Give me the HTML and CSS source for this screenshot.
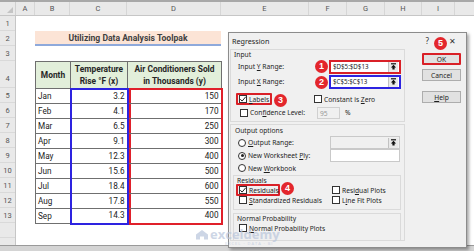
FILE: index.html
```html
<!DOCTYPE html>
<html lang="en">
<head>
    <meta charset="UTF-8">
    <title>Regression - Data Analysis Toolpak</title>
    <link rel="stylesheet" href="styles.css">
</head>
<body>
    <div class="sheet">
        <div class="colhdr">
            <div class="corner"><span class="tri"></span></div>
            <div class="col c-a">A</div>
            <div class="col c-b">B</div>
            <div class="col c-c">C</div>
            <div class="col c-d">D</div>
            <div class="col c-e">E</div>
            <div class="col c-f">F</div>
            <div class="col c-g">G</div>
            <div class="col c-h">H</div>
            <div class="col c-i">I</div>
            <div class="col c-j"></div>
        </div>
        <div class="sheet-main">
            <div class="rowhdr">
                <div class="rn">1</div>
                <div class="rn">2</div>
                <div class="rn">3</div>
                <div class="rn tall">4</div>
                <div class="rn">5</div>
                <div class="rn">6</div>
                <div class="rn">7</div>
                <div class="rn">8</div>
                <div class="rn">9</div>
                <div class="rn">10</div>
                <div class="rn">11</div>
                <div class="rn">12</div>
                <div class="rn">13</div>
                <div class="rn"></div>
            </div>
            <div class="cells">
                <div class="blank"></div>
                <div class="title">Utilizing Data Analysis Toolpak</div>
                <div class="blank"></div>
                <table class="data">
                    <tr class="head">
                        <th class="w-b">Month</th>
                        <th class="w-c">Temperature<br>Rise °F (x)</th>
                        <th class="w-d">Air Conditioners Sold<br>in Thousands (y)</th>
                    </tr>
                    <tr><td>Jan</td><td class="sx first">3.2</td><td class="sy first">150</td></tr>
                    <tr><td>Feb</td><td class="sx">4.1</td><td class="sy">170</td></tr>
                    <tr><td>Mar</td><td class="sx">6.5</td><td class="sy">250</td></tr>
                    <tr><td>Apr</td><td class="sx">9.1</td><td class="sy">300</td></tr>
                    <tr><td>May</td><td class="sx">12.3</td><td class="sy">400</td></tr>
                    <tr><td>Jun</td><td class="sx">15.6</td><td class="sy">500</td></tr>
                    <tr><td>Jul</td><td class="sx">18.4</td><td class="sy">600</td></tr>
                    <tr><td>Aug</td><td class="sx">17.8</td><td class="sy">550</td></tr>
                    <tr><td>Sep</td><td class="sx last">14.3</td><td class="sy last">400</td></tr>
                </table>
            </div>
        </div>
        <div class="bottombar"></div>
    </div>

    <div class="dialog">
        <div class="dlg-title">
            <span>Regression</span>
            <span class="dlg-ctl"><span class="q">?</span><span class="x">✕</span></span>
        </div>
        <div class="dlg-body">
            <div class="dlg-main">
                <div class="grp grp-input">
                    <div class="grp-label">Input</div>
                    <div class="fld">
                        <span class="fld-label">Input <u>Y</u> Range:</span>
                        <span class="ref ref-red"><span class="ref-text">$D$5:$D$13</span><span class="pick"><svg viewBox="0 0 7 7" width="7" height="7"><path d="M1 0.8h5" stroke="#111" stroke-width="1.2"/><path d="M3.5 1.8l2.6 2.6h-1.5v2.2h-2.2v-2.2h-1.5z" fill="#111"/></svg></span></span>
                    </div>
                    <div class="fld">
                        <span class="fld-label">Input <u>X</u> Range:</span>
                        <span class="ref ref-blue"><span class="ref-text">$C$5:$C$13</span><span class="pick"><svg viewBox="0 0 7 7" width="7" height="7"><path d="M1 0.8h5" stroke="#111" stroke-width="1.2"/><path d="M3.5 1.8l2.6 2.6h-1.5v2.2h-2.2v-2.2h-1.5z" fill="#111"/></svg></span></span>
                    </div>
                    <div class="opt labels-row">
                        <span class="hl hl-labels"><span class="chk"><svg viewBox="0 0 8 8" width="8" height="8"><path d="M1.3 4.2l1.8 1.9 3.7-4.4" fill="none" stroke="#222" stroke-width="1"/></svg></span><span><u>L</u>abels</span></span>
                        <span class="opt-right"><span class="chk"></span><span>Constant is <u>Z</u>ero</span></span>
                    </div>
                    <div class="opt conf-row">
                        <span class="chk"></span><span>Con<u>f</u>idence Level:</span>
                        <span class="num">95</span><span class="pct">%</span>
                    </div>
                </div>
                <div class="grp grp-output">
                    <div class="grp-label">Output options</div>
                    <div class="fld">
                        <span class="radio-label"><span class="radio"></span><span><u>O</u>utput Range:</span></span>
                        <span class="ref ref-off"><span class="ref-text"></span><span class="pick"><svg viewBox="0 0 7 7" width="7" height="7"><path d="M1 0.8h5" stroke="#111" stroke-width="1.2"/><path d="M3.5 1.8l2.6 2.6h-1.5v2.2h-2.2v-2.2h-1.5z" fill="#111"/></svg></span></span>
                    </div>
                    <div class="fld">
                        <span class="radio-label"><span class="radio on"></span><span>New Worksheet <u>P</u>ly:</span></span>
                        <span class="ref ref-plain"></span>
                    </div>
                    <div class="opt wb-row"><span class="radio"></span><span>New <u>W</u>orkbook</span></div>
                    <div class="sub sub-res">
                        <div class="grp-label">Residuals</div>
                        <div class="opt res-row">
                            <span class="hl hl-res"><span class="chk"><svg viewBox="0 0 8 8" width="8" height="8"><path d="M1.3 4.2l1.8 1.9 3.7-4.4" fill="none" stroke="#222" stroke-width="1"/></svg></span><span>Residuals</span></span>
                            <span class="opt-right"><span class="chk"></span><span>Resi<u>d</u>ual Plots</span></span>
                        </div>
                        <div class="opt res-row">
                            <span class="plain"><span class="chk"></span><span><u>S</u>tandardized Residuals</span></span>
                            <span class="opt-right"><span class="chk"></span><span>L<u>i</u>ne Fit Plots</span></span>
                        </div>
                    </div>
                    <div class="sub sub-norm">
                        <div class="grp-label">Normal Probability</div>
                        <div class="opt res-row">
                            <span class="plain"><span class="chk"></span><span><u>N</u>ormal Probability Plots</span></span>
                        </div>
                    </div>
                </div>
            </div>
            <div class="dlg-buttons">
                <button class="btn btn-ok">OK</button>
                <button class="btn btn-cancel">Cancel</button>
                <button class="btn btn-help"><u>H</u>elp</button>
            </div>
        </div>

        <span class="badge b1">1</span>
        <span class="badge b2">2</span>
        <span class="badge b3">3</span>
        <span class="badge b4">4</span>
        <span class="badge b5">5</span>
    </div>

    <div class="watermark">
        <div class="wm-main">
            <svg viewBox="0 0 14 11" width="14" height="11"><path d="M1 5.5l6-4.5 6 4.5v5h-4v-3h-4v3h-4z" fill="#b9c6dc"/></svg>
            <span>exceldemy</span>
        </div>
        <div class="wm-sub">EXCEL · DATA · BI</div>
    </div>
</body>
</html>
```

FILE: styles.css
```css
body {
    margin: 0;
    width: 474px;
    height: 251px;
    overflow: hidden;
    background-color: #fff;
    font-family: Roboto, "Liberation Sans", sans-serif;
    color: #222;
}

/* ---------- spreadsheet ---------- */

.sheet {
    height: 251px;
    display: flex;
    flex-direction: column;
}

.colhdr {
    display: flex;
    height: 13px;
    border-top: 2px solid #a8a8a8;
    background-color: #e9e9e9;
    border-bottom: 1px solid #c6c6c6;
}

.corner {
    width: 16px;
    border-right: 1px solid #d0d0d0;
    box-sizing: border-box;
    position: relative;
}

.tri {
    position: absolute;
    right: 2px;
    bottom: 2px;
    border-left: 6px solid transparent;
    border-bottom: 6px solid #c4c4c4;
}

.col {
    box-sizing: border-box;
    border-right: 1px solid #d6d6d6;
    text-align: center;
    font-size: 7.5px;
    line-height: 13px;
    color: #555;
}

.c-a { width: 19px; }
.c-b { width: 35px; }
.c-c { width: 57px; }
.c-d { width: 94px; }
.c-e { width: 88px; }
.c-f { width: 38px; }
.c-g { width: 38px; }
.c-h { width: 37px; }
.c-i { width: 33px; }
.c-j { flex: 1; border-right: none; }

.sheet-main {
    flex: 1;
    display: flex;
    overflow: hidden;
}

.rowhdr {
    width: 16px;
    background-color: #e9e9e9;
    border-right: 1px solid #c6c6c6;
    box-sizing: border-box;
}

.rn {
    height: 15px;
    box-sizing: border-box;
    border-bottom: 1px solid #d9d9d9;
    font-size: 7.5px;
    line-height: 15px;
    text-align: center;
    color: #555;
}

    .rn.tall {
        height: 27px;
        line-height: 36px;
    }

.cells {
    flex: 1;
}

.blank {
    height: 15px;
}

.title {
    margin-left: 19px;
    width: 186px;
    height: 15px;
    box-sizing: border-box;
    background-color: #fce4d6;
    border-bottom: 2px solid #8ea9db;
    text-align: center;
    font-weight: bold;
    font-size: 8.6px;
    line-height: 14px;
    color: #404040;
}

.data {
    margin-left: 19px;
    border-collapse: collapse;
    font-size: 8.2px;
}

    .data th,
    .data td {
        border: 1px solid #6f6f6f;
        padding: 0 2px;
        box-sizing: border-box;
    }

    .data th {
        height: 27px;
        background-color: #e2efda;
        font-weight: bold;
        font-size: 8.4px;
        line-height: 12px;
        color: #262626;
        white-space: nowrap;
    }

    .data td {
        height: 15px;
        line-height: 13px;
        text-align: right;
    }

        .data td:first-child {
            text-align: left;
        }

.w-b { width: 35px; }
.w-c { width: 57px; }
.w-d { width: 94px; }

.data td.sx {
    border-left: 2px solid #2d23e0;
    border-right: 2px solid #2d23e0;
}

    .data td.sx.first { border-top: 2px solid #2d23e0; }
    .data td.sx.last { border-bottom: 2px solid #2d23e0; }

.data td.sy {
    border-right: 2px solid #e0202a;
    box-shadow: inset 2px 0 0 #e0202a;
}

    .data td.sy.first { border-top: 2px solid #e0202a; }
    .data td.sy.last { border-bottom: 2px solid #e0202a; }

.bottombar {
    height: 5px;
    border-top: 1px solid #9a9a9a;
    background-color: #d4d4d4;
}

/* ---------- regression dialog ---------- */

.dialog {
    position: absolute;
    left: 228px;
    top: 32px;
    width: 239px;
    height: 216px;
    box-sizing: border-box;
    background-color: #f0f0f0;
    border: 1px solid #8c8c8c;
    box-shadow: 2px 2px 3px rgba(0, 0, 0, 0.35);
    font-family: "Noto Sans", "Liberation Sans", sans-serif;
    font-size: 6.7px;
    color: #1e1e1e;
}

.dlg-title {
    height: 15px;
    display: flex;
    align-items: center;
    justify-content: space-between;
    padding: 0 10px 0 3px;
    font-size: 7.2px;
}

.dlg-ctl {
    display: flex;
    gap: 20px;
    font-size: 8px;
    color: #333;
}

.dlg-body {
    display: flex;
}

.dlg-main {
    width: 175px;
    margin-left: 1px;
}

.grp {
    border: 1px solid #dadada;
    box-sizing: border-box;
}

.grp-label {
    height: 9px;
    line-height: 9px;
    padding-left: 3px;
}

.grp-input {
    height: 73px;
    margin-top: 1px;
}

.fld {
    display: flex;
    align-items: center;
    justify-content: space-between;
    height: 15px;
    padding: 0 3px 0 7px;
}

.ref {
    display: flex;
    align-items: center;
    width: 72px;
    height: 14px;
    box-sizing: border-box;
    background-color: #fff;
    border: 2px solid #d92027;
}

.ref-red { border-color: #d92027; }
.ref-blue { border-color: #2d23e0; }

.ref-off {
    width: 70px;
    height: 13px;
    margin-right: 1px;
    border: 1px solid #c9c9c9;
    background-color: #f0f0f0;
}

.ref-plain {
    width: 70px;
    height: 13px;
    margin-right: 1px;
    border: 1px solid #c9c9c9;
}

.ref-text {
    flex: 1;
    padding-left: 2px;
    font-size: 6.2px;
}

.pick {
    width: 9px;
    height: 10px;
    margin-right: 1px;
    display: flex;
    align-items: center;
    justify-content: center;
    background-color: #e9e9e9;
    border-left: 1px solid #c2c2c2;
}

.opt {
    display: flex;
    align-items: center;
}

.labels-row {
    height: 14px;
    margin-top: 3px;
    padding-left: 5px;
}

.conf-row {
    height: 13px;
    padding-left: 9px;
}

.opt-right {
    display: flex;
    align-items: center;
    margin-left: auto;
}

.labels-row .opt-right {
    margin-left: 42px;
}

.hl {
    display: flex;
    align-items: center;
    height: 12px;
    box-sizing: border-box;
    border: 2px solid #d92027;
    border-radius: 1px;
    padding: 0 1px 0 1px;
    white-space: nowrap;
}

.hl-res { width: 44px; }

.plain {
    display: flex;
    align-items: center;
    padding-left: 3px;
}

.chk {
    width: 8px;
    height: 8px;
    flex-shrink: 0;
    box-sizing: border-box;
    border: 1px solid #333;
    background-color: #fff;
    margin-right: 2px;
    display: flex;
}

    .chk svg {
        margin: -1px;
    }

.num {
    width: 23px;
    height: 12px;
    margin-left: 12px;
    box-sizing: border-box;
    border: 1px solid #d0d0d0;
    background-color: #f0f0f0;
    color: #9a9a9a;
    line-height: 11px;
    padding-left: 2px;
}

.pct {
    margin-left: 5px;
}

.grp-output {
    height: 117px;
    margin-top: 2px;
    padding-top: 1px;
}

    .grp-output > .grp-label {
        height: 10px;
        padding-left: 4px;
    }

.radio-label {
    display: flex;
    align-items: center;
}

.radio {
    width: 8px;
    height: 8px;
    box-sizing: border-box;
    border: 1px solid #333;
    border-radius: 50%;
    background-color: #fff;
    margin-right: 2px;
    position: relative;
}

    .radio.on::after {
        content: "";
        position: absolute;
        left: 1.5px;
        top: 1.5px;
        width: 3px;
        height: 3px;
        border-radius: 50%;
        background-color: #222;
    }

.grp-output .fld {
    height: 13px;
    padding-left: 7px;
}

.wb-row {
    height: 12px;
    padding-left: 7px;
}

.sub {
    margin: 0 3px 0 2px;
    border: 1px solid #dadada;
}

.sub-res {
    height: 33px;
    margin-top: 1px;
}

.sub-norm {
    height: 26px;
    margin-top: 3px;
}

.res-row {
    height: 10px;
    padding-left: 2px;
}

.sub-res .res-row .opt-right {
    margin-left: auto;
    width: 68px;
}

.dlg-buttons {
    margin-left: 17px;
    width: 39px;
    display: flex;
    flex-direction: column;
    padding-top: 5px;
}

.btn {
    font-family: inherit;
    font-size: 6.7px;
    color: #1e1e1e;
    padding: 0;
    height: 12px;
    background-color: #e1e1e1;
    border: 1px solid #adadad;
}

.btn-ok {
    border: 2px solid #d92027;
    border-radius: 1px;
}

.btn-cancel {
    margin-top: 4px;
}

.btn-help {
    margin-top: 10px;
}

.badge {
    position: absolute;
    width: 13px;
    height: 13px;
    border-radius: 50%;
    background-color: #e3262c;
    color: #fff;
    font-family: "Liberation Sans", sans-serif;
    font-weight: bold;
    font-size: 9px;
    line-height: 13px;
    text-align: center;
}

.b1 { left: 86px; top: 27px; }
.b2 { left: 86px; top: 43px; }
.b3 { left: 45px; top: 61px; }
.b4 { left: 52px; top: 149px; }
.b5 { left: 205px; top: 4px; }

/* ---------- watermark ---------- */

.watermark {
    position: absolute;
    left: 195px;
    top: 227px;
    opacity: 0.7;
    pointer-events: none;
}

.wm-main {
    display: flex;
    align-items: center;
    gap: 1px;
    font-family: "Open Sans", sans-serif;
    font-weight: bold;
    font-size: 13px;
    line-height: 14px;
    color: #b9c6dc;
}

.wm-sub {
    margin-left: 30px;
    font-family: "Open Sans", sans-serif;
    font-size: 4px;
    line-height: 5px;
    letter-spacing: 1px;
    color: #b9c6dc;
}
```
